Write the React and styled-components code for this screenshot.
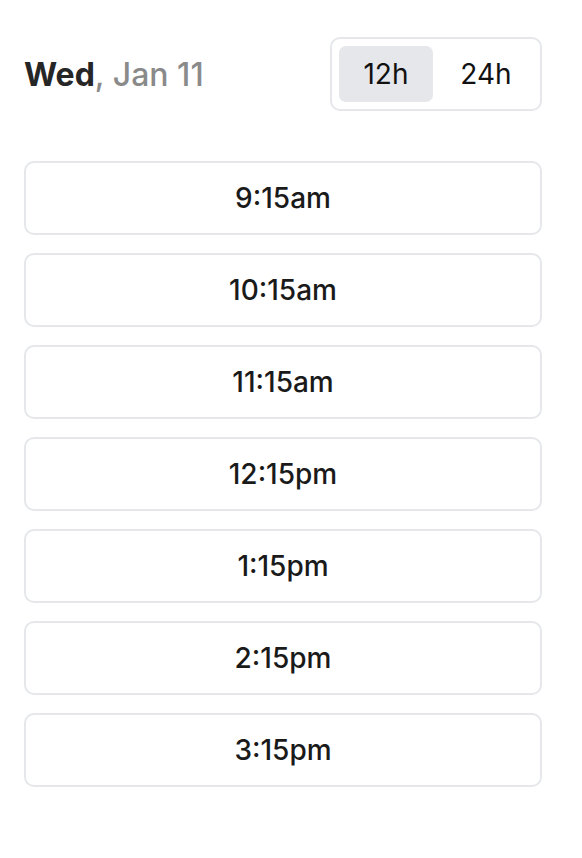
import React, { useState } from "react"
import styled, { createGlobalStyle } from "styled-components"

const GlobalStyle = createGlobalStyle`
  body {
    margin: 0;
    background: #fff;
    font-family: Inter, "Noto Sans", sans-serif;
    color: #111827;
  }
`

const Page = styled.div`
  padding: 37px 40px 0 24px;
  display: flex;
  flex-direction: column;
  gap: 50px;
`

const Header = styled.div`
  display: flex;
  align-items: center;
  justify-content: space-between;
`

const DateTitle = styled.div`
  font-size: 32px;
  font-weight: 700;
  color: #262626;
`

const DateRest = styled.span`
  font-weight: 500;
  color: #8a8a8a;
`

const Toggle = styled.div`
  display: flex;
  gap: 6px;
  padding: 7px;
  border: 2px solid #e5e7eb;
  border-radius: 10px;
`

const ToggleButton = styled.button`
  height: 56px;
  width: 94px;
  border: none;
  border-radius: 7px;
  font-family: inherit;
  font-size: 28px;
  color: #111;
  cursor: pointer;
  background: ${(p) => (p.$active ? "#e5e7eb" : "transparent")};
`

const SlotList = styled.div`
  display: flex;
  flex-direction: column;
  gap: 18px;
`

const Slot = styled.button`
  height: 74px;
  width: 100%;
  border: 2px solid #e5e7eb;
  border-radius: 10px;
  background: #fff;
  font-family: inherit;
  font-size: 28px;
  font-weight: 500;
  color: #1a1a1a;
  cursor: pointer;
`

const slots = ["9:15am", "10:15am", "11:15am", "12:15pm", "1:15pm", "2:15pm", "3:15pm"]

export default function App() {
  const [format, setFormat] = useState("12h")
  return (
    <>
      <GlobalStyle />
      <Page>
        <Header>
          <DateTitle>
            Wed<DateRest>, Jan 11</DateRest>
          </DateTitle>
          <Toggle>
            <ToggleButton $active={format === "12h"} onClick={() => setFormat("12h")}>
              12h
            </ToggleButton>
            <ToggleButton $active={format === "24h"} onClick={() => setFormat("24h")}>
              24h
            </ToggleButton>
          </Toggle>
        </Header>
        <SlotList>
          {slots.map((s) => (
            <Slot key={s}>{s}</Slot>
          ))}
        </SlotList>
      </Page>
    </>
  )
}
